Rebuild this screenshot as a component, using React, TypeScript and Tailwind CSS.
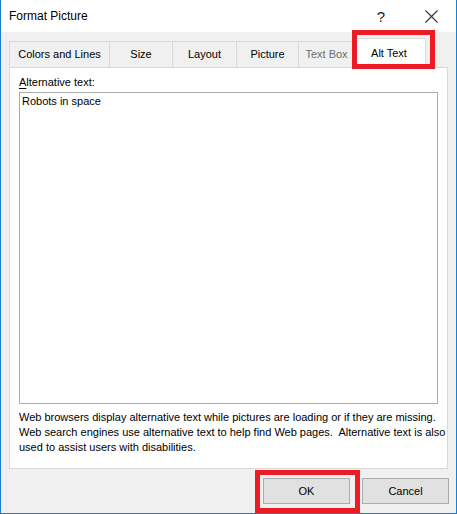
import React from "react";

const tabs = [
  { label: "Colors and Lines", w: "w-[101px]" },
  { label: "Size", w: "w-[64px]" },
  { label: "Layout", w: "w-[65px]" },
  { label: "Picture", w: "w-[63px]" },
  { label: "Text Box", w: "w-[57px]", disabled: true },
];

export default function App() {
  return (
    <div
      className="relative flex h-[514px] w-[457px] flex-col border-x border-b border-[#1a7fd4] bg-[#f0f0f0] text-[11px] text-black"
      style={{ fontFamily: '"Liberation Sans", Arial, sans-serif' }}
    >
      {/* Title bar */}
      <div className="flex h-[32px] items-center bg-white pl-[8px]">
        <span className="text-[12px] leading-none">Format Picture</span>
        <span className="ml-auto mr-[40px] text-[15px] leading-none text-[#222]">?</span>
        <svg width="13" height="13" viewBox="0 0 13 13" className="mr-[18px]">
          <path d="M0.5 0.5 L12.5 12.5 M12.5 0.5 L0.5 12.5" stroke="#333" strokeWidth="1.1" fill="none" />
        </svg>
      </div>

      {/* Tabs */}
      <div className="flex h-[35px] items-end pl-[8px]">
        {tabs.map((t) => (
          <div
            key={t.label}
            className={`flex h-[26px] items-center justify-center border border-b-0 border-[#d9d9d9] -ml-px first:ml-0 ${t.w} ${
              t.disabled ? "text-[#6d6d6d]" : ""
            }`}
          >
            {t.label}
          </div>
        ))}
        <div className="relative z-10 -mb-px -ml-[3px] flex h-[30px] w-[74px] items-center justify-center border border-b-0 border-[#d9d9d9] bg-white">
          Alt Text
        </div>
      </div>

      {/* Tab panel */}
      <div className="mx-[8px] flex h-[402px] flex-col border border-[#d9d9d9] bg-white px-[9px] pt-[6px]">
        <div className="h-[17px] leading-[17px]">
          <span className="underline underline-offset-2">A</span>lternative text:
        </div>
        <div className="mt-[1px] h-[312px] border border-[#ababab] px-[2px] leading-[17px]">
          Robots in space
        </div>
        <p className="mt-[6px] whitespace-nowrap leading-[15px]">
          Web browsers display alternative text while pictures are loading or if they are missing.
          <br />
          Web search engines use alternative text to help find Web pages.&nbsp; Alternative text is also
          <br />
          used to assist users with disabilities.
        </p>
      </div>

      {/* Buttons */}
      <div className="flex justify-end gap-[12px] pr-[7px] pt-[9px]">
        <button className="h-[26px] w-[87px] border border-[#adadad] bg-[#e1e1e1]">OK</button>
        <button className="h-[26px] w-[87px] border border-[#adadad] bg-[#e1e1e1]">Cancel</button>
      </div>

      {/* Red annotation boxes */}
      <div className="pointer-events-none absolute left-[351px] top-[30px] z-20 h-[39px] w-[83px] border-[5px] border-[#ed1c24]" />
      <div className="pointer-events-none absolute left-[254px] top-[470px] z-20 h-[43px] w-[105px] border-[5px] border-[#ed1c24]" />
    </div>
  );
}
